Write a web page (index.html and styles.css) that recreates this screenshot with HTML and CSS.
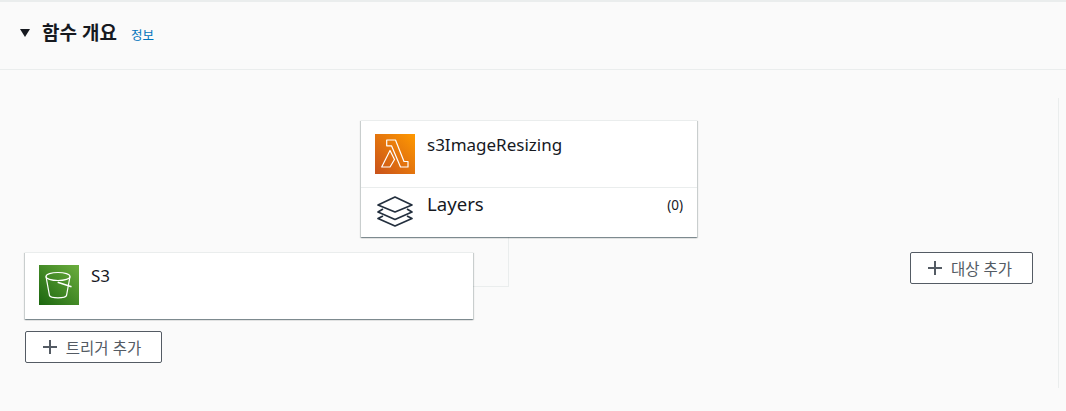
FILE: index.html
```html
<!DOCTYPE html>
<html lang="ko">
<head>
  <meta charset="UTF-8">
  <meta name="viewport" content="width=device-width, initial-scale=1.0">
  <title>함수 개요</title>
  <link rel="stylesheet" href="styles.css">
</head>
<body>
  <section class="panel">
    <header class="panel-header">
      <svg class="caret" width="10" height="8" viewBox="0 0 10 8"><polygon points="0,0 10,0 5,8" fill="#16191f"/></svg>
      <h2>함수 개요</h2>
      <a class="info" href="#">정보</a>
    </header>

    <div class="canvas">
      <div class="side-line"></div>

      <!-- 함수와 트리거 사이 연결선 -->
      <div class="connector"></div>

      <div class="node node-function">
        <div class="node-row row-main">
          <svg class="tile" width="40" height="40" viewBox="0 0 40 40">
            <defs>
              <linearGradient id="orange" x1="0" y1="1" x2="1" y2="0">
                <stop offset="0" stop-color="#c8511b"/>
                <stop offset="1" stop-color="#ff9900"/>
              </linearGradient>
            </defs>
            <rect width="40" height="40" fill="url(#orange)"/>
            <path d="M11.700 6H20.500L29 27.500H33V33H25.500L16.500 11.800H11.700ZM6.700 33L15 16.500L19.500 25.500L15 33Z" fill="none" stroke="#fff" stroke-width="1.200" stroke-linejoin="round"/>
          </svg>
          <span class="node-name">s3ImageResizing</span>
        </div>
        <div class="node-row row-layers">
          <svg class="layers-icon" width="38" height="32" viewBox="0 0 38 32" fill="none" stroke="#232f3e" stroke-width="1.700" stroke-linejoin="round">
            <polygon points="19,2 36,10 19,17 2,10"/>
            <path d="M7 14L2 17L19 24.500L36 17L31 14"/>
            <path d="M7 21L2 23.500L19 31L36 23.500L31 21"/>
          </svg>
          <span class="node-name">Layers</span>
          <span class="count">(0)</span>
        </div>
      </div>

      <div class="node node-trigger">
        <div class="node-row row-main">
          <svg class="tile" width="40" height="40" viewBox="0 0 40 40">
            <defs>
              <linearGradient id="green" x1="0" y1="1" x2="1" y2="0">
                <stop offset="0" stop-color="#1b660f"/>
                <stop offset="1" stop-color="#6cae3e"/>
              </linearGradient>
            </defs>
            <rect width="40" height="40" fill="url(#green)"/>
            <g fill="none" stroke="#fff" stroke-width="1.200">
              <ellipse cx="19" cy="11.500" rx="12" ry="4"/>
              <path d="M7 11.500L10.500 30.500C11 32 15 32.800 19 32.800S27 32 27.500 30.500L31 11.500"/>
              <path d="M18.700 17.300L32.500 21.700" stroke-width="1.500"/>
            </g>
          </svg>
          <span class="node-name">S3</span>
        </div>
      </div>

      <button class="add-btn btn-trigger" type="button">
        <svg width="16" height="16" viewBox="0 0 16 16"><path d="M8 1V15M1 8H15" stroke="#545b64" stroke-width="2"/></svg>
        트리거 추가
      </button>
      <button class="add-btn btn-target" type="button">
        <svg width="16" height="16" viewBox="0 0 16 16"><path d="M8 1V15M1 8H15" stroke="#545b64" stroke-width="2"/></svg>
        대상 추가
      </button>
    </div>
  </section>
</body>
</html>
```
FILE: styles.css
```css
body {
  margin: 0;
  background-color: #fafafa;
  font-family: "Noto Sans", "Noto Sans CJK KR", sans-serif;
  color: #16191f;
}
.panel {
  height: 411px;
  overflow: hidden;
  border-top: 2px solid #eaeded;
  box-sizing: border-box;
}
.panel-header {
  display: flex;
  align-items: center;
  height: 68px;
  padding: 0 0 5px 20px;
  box-sizing: border-box;
  border-bottom: 1px solid #eaeded;
}
.caret {
  margin-right: 12px;
}
h2 {
  margin: 0 14px 0 0;
  font-size: 19px;
  font-weight: 700;
  line-height: 24px;
}
.info {
  margin-top: 2px;
  font-size: 12.500px;
  color: #0073bb;
  text-decoration: none;
}

/* 다이어그램 영역 */
.canvas {
  position: relative;
  height: 341px;
}
.side-line {
  position: absolute;
  left: 1058px;
  top: 28px;
  width: 1px;
  height: 290px;
  background-color: #eaeded;
}
.connector {
  position: absolute;
  left: 473px;
  top: 167px;
  width: 36px;
  height: 50px;
  box-sizing: border-box;
  border-right: 1px solid #eaeded;
  border-bottom: 1px solid #eaeded;
}
.node {
  position: absolute;
  background-color: #fff;
  border-top: 1px solid #eaeded;
  box-shadow: 0 1px 1px 0 rgba(0, 28, 36, 0.3), 1px 1px 1px 0 rgba(0, 28, 36, 0.15), -1px 1px 1px 0 rgba(0, 28, 36, 0.15);
  box-sizing: border-box;
}
.node-function {
  left: 361px;
  top: 50px;
  width: 336px;
  height: 117px;
}
.node-trigger {
  left: 25px;
  top: 182px;
  width: 448px;
  height: 67px;
}
.node-row {
  display: flex;
  align-items: flex-start;
}
.row-main {
  padding: 12px 14px;
  height: 66px;
  box-sizing: border-box;
}
.node-function .row-main {
  padding-top: 13px;
}
.tile {
  flex: none;
  margin-right: 12px;
}
.node-name {
  margin-top: -1px;
  font-size: 17px;
  line-height: 24px;
  color: #16191f;
}
.row-layers {
  border-top: 1px solid #eaeded;
  padding: 4px 14px 0 15px;
}
.layers-icon {
  flex: none;
  margin: 3px 13px 0 0;
}
.row-layers .node-name {
  margin-top: 0;
  font-size: 18.600px;
}
.count {
  margin-left: auto;
  font-size: 13.500px;
  line-height: 26px;
}
.add-btn {
  position: absolute;
  display: flex;
  align-items: center;
  justify-content: center;
  gap: 8px;
  height: 32px;
  padding: 0 4px 0 0;
  background-color: #fff;
  border: 1px solid #545b64;
  border-radius: 2px;
  font-family: inherit;
  font-size: 15.500px;
  color: #545b64;
}
.btn-trigger {
  left: 25px;
  top: 261px;
  width: 137px;
}
.btn-target {
  left: 910px;
  top: 182px;
  width: 123px;
}
```
